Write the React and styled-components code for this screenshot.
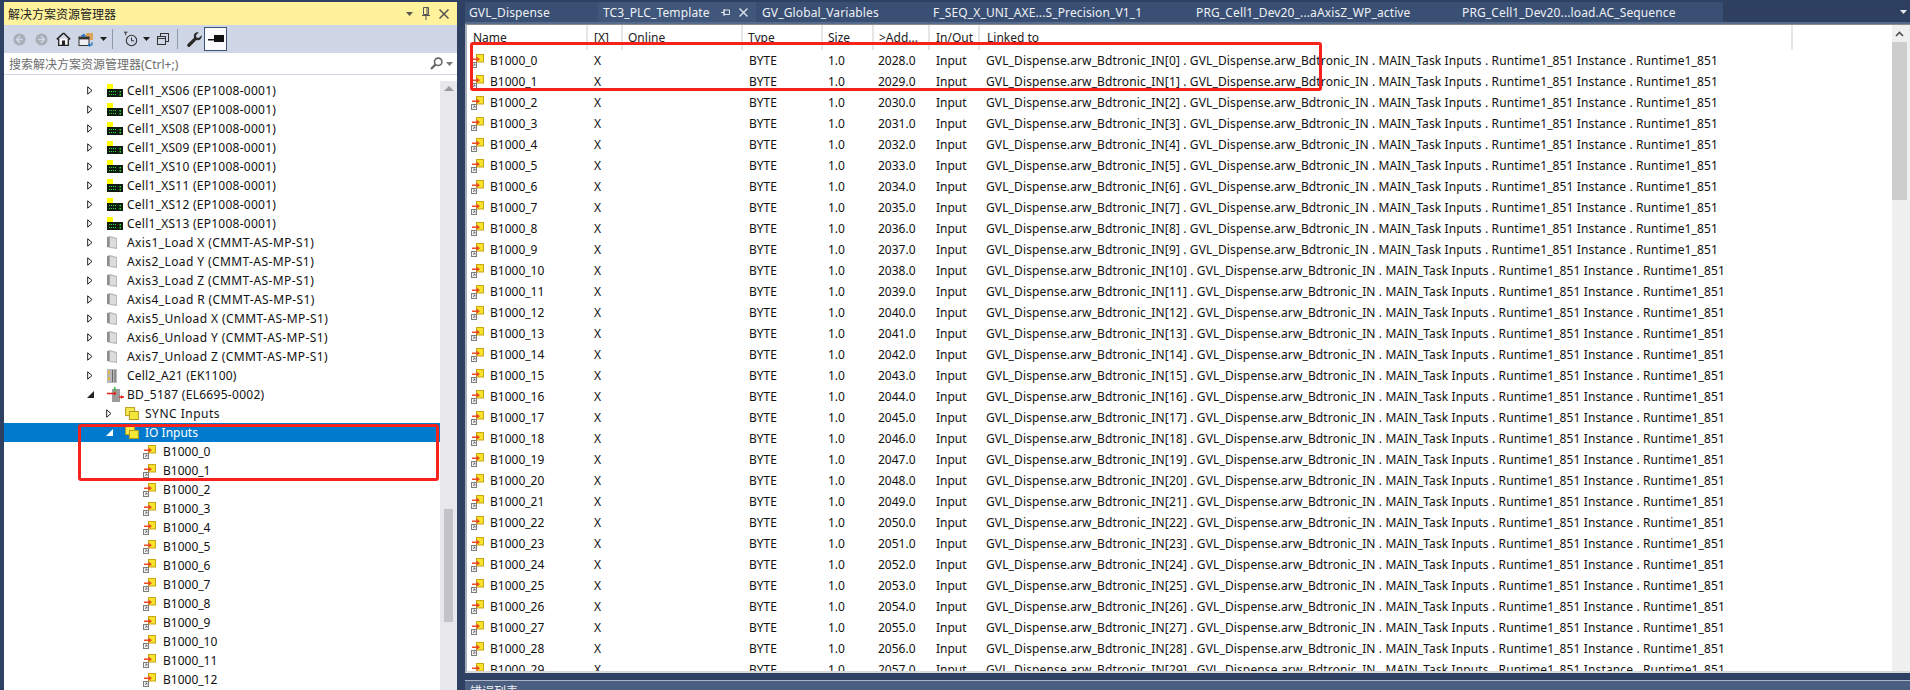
import React from "react";
import styled, { createGlobalStyle } from "styled-components";

const Global = createGlobalStyle`
  html, body { margin: 0; padding: 0; background: #2f4163; overflow: hidden; }
  #root { width: 1910px; height: 690px; }
`;

const FONT = `"Noto Sans", "Noto Sans CJK SC", sans-serif`;

const Shell = styled.div`
  position: relative;
  width: 1910px;
  height: 690px;
  overflow: hidden;
  display: flex;
  align-items: flex-start;
  background: #2f4163;
  font-family: ${FONT};
  font-size: 12px;
  color: #111;
  padding: 2px 0 0 4px;
  box-sizing: border-box;
`;

const LeftPanel = styled.section`
  width: 453px;
  height: 688px;
  flex: none;
  display: flex;
  flex-direction: column;
  background: #fff;
`;
const TitleBar = styled.header`
  height: 23px;
  flex: none;
  background: #fff29d;
  display: flex;
  align-items: center;
  padding: 0 8px 0 4px;
  font-size: 12px;
  color: #222;
`;
const TitleText = styled.span`
  flex: 1;
`;
const TitleIcons = styled.div`
  display: flex;
  align-items: center;
  gap: 9px;
`;
const Toolbar = styled.div`
  height: 28px;
  flex: none;
  background: #cfd6e5;
  display: flex;
  align-items: center;
  padding-left: 8px;
`;
const ToolSlot = styled.span`
  width: ${(p) => p.$w}px;
  height: 24px;
  flex: none;
  display: flex;
  align-items: center;
  justify-content: center;
`;
const ToolSep = styled.span`
  width: 1px;
  height: 20px;
  flex: none;
  background: #8e99ae;
  margin: 0 ${(p) => p.$m}px;
`;
const ActiveTool = styled.span`
  width: 23px;
  height: 24px;
  flex: none;
  margin-left: 1px;
  box-sizing: border-box;
  border: 1px solid #3d5275;
  background: #fbfbfd;
  display: flex;
  align-items: center;
  justify-content: center;
`;
const SearchBox = styled.div`
  height: 22px;
  flex: none;
  background: #fff;
  display: flex;
  align-items: center;
  padding: 0 2px 0 5px;
  box-sizing: border-box;
  border-bottom: 1px solid #cfd6e5;
  color: #6d6d6d;
  font-size: 12px;
`;
const SearchText = styled.span`
  flex: 1;
`;
const TreeArea = styled.div`
  flex: 1;
  min-height: 0;
  display: flex;
  padding-top: 6px;
  overflow: hidden;
`;
const TreeList = styled.div`
  flex: 1;
  min-width: 0;
`;
const TreeRow = styled.div`
  height: 19px;
  display: flex;
  align-items: center;
  white-space: nowrap;
  padding-left: ${(p) => p.$indent}px;
  background: ${(p) => (p.$selected ? "#007acc" : "transparent")};
  color: ${(p) => (p.$selected ? "#fff" : "#111")};
  font-size: 12px;
`;
const TreeArrow = styled.span`
  width: ${(p) => p.$w}px;
  height: 19px;
  flex: none;
  display: flex;
  align-items: center;
  justify-content: flex-start;
`;
const TreeIcon = styled.span`
  width: ${(p) => p.$w}px;
  height: 19px;
  flex: none;
  display: flex;
  align-items: center;
`;
const TreeLabel = styled.span`
  letter-spacing: ${(p) => p.$ls || 0}px;
`;
const TreeScroll = styled.div`
  width: 17px;
  flex: none;
  background: #e8e8ec;
  display: flex;
  flex-direction: column;
  align-items: center;
  position: relative;
`;
const TreeArrowUp = styled.span`
  margin-top: 5px;
  width: 0;
  height: 0;
  border-left: 5px solid transparent;
  border-right: 5px solid transparent;
  border-bottom: 5px solid #9a9aa1;
`;
const TreeThumb = styled.span`
  width: 9px;
  height: 113px;
  background: #c2c3c9;
  margin-top: 418px;
`;

const RightColumn = styled.div`
  width: 1445px;
  margin-left: 8px;
  flex: none;
  display: flex;
  flex-direction: column;
  height: 688px;
`;
const TabStrip = styled.nav`
  height: 20px;
  flex: none;
  display: flex;
  align-items: stretch;
  background: #2e3f5f;
  border-bottom: 2px solid #566a8c;
  color: #eef1f6;
  font-size: 12px;
  letter-spacing: 0.13px;
`;
const Tab = styled.div`
  width: ${(p) => p.$w}px;
  flex: none;
  box-sizing: border-box;
  padding-left: ${(p) => p.$pad}px;
  background: ${(p) => (p.$active ? "#40567b" : "#3a4f74")};
  display: flex;
  align-items: center;
  white-space: nowrap;
  overflow: hidden;
`;
const TabActions = styled.span`
  margin-left: auto;
  display: flex;
  align-items: center;
  gap: 9px;
  padding-right: 8px;
`;
const TabOverflow = styled.span`
  margin-left: auto;
  margin-right: 3px;
  align-self: center;
  display: flex;
`;
const Editor = styled.div`
  height: 649px;
  flex: none;
  display: flex;
  background: #fff;
  border-top: 1px solid #8a8a8a;
  border-left: 2px solid #a9afbb;
  border-bottom: 2px solid #d8d8d8;
  box-sizing: border-box;
  overflow: hidden;
`;
const TableWrap = styled.div`
  flex: 1;
  min-width: 0;
  overflow: hidden;
`;
const HeaderRow = styled.div`
  height: 25px;
  display: grid;
  grid-template-columns: ${(p) => p.$cols};
  font-size: 12px;
  color: #222;
`;
const HeaderCell = styled.div`
  border-right: 2px solid #e6e6e6;
  box-sizing: border-box;
  padding: 4px 0 0 ${(p) => p.$pad}px;
  white-space: nowrap;
  overflow: hidden;
`;
const DataRow = styled.div`
  height: 21px;
  display: grid;
  grid-template-columns: ${(p) => p.$cols};
  align-items: center;
  white-space: nowrap;
  font-size: 12px;
  color: #111;
`;
const DataCell = styled.div`
  padding-left: ${(p) => p.$pad || 0}px;
  display: flex;
  align-items: center;
`;
const LinkedText = styled.span`
  letter-spacing: 0.13px;
`;
const NameIcon = styled.span`
  width: 19px;
  flex: none;
  display: flex;
`;
const VScroll = styled.div`
  width: 18px;
  flex: none;
  background: #f0f0f0;
  display: flex;
  flex-direction: column;
`;
const VScrollBtn = styled.span`
  width: 15px;
  height: 17px;
  display: flex;
  align-items: center;
  justify-content: center;
`;
const VThumb = styled.span`
  width: 15px;
  height: 158px;
  background: #cdcdcd;
`;
const BottomPanel = styled.div`
  height: 12px;
  margin-top: 7px;
  flex: none;
  background: #4d5f80;
  border-top: 1px solid #a9b3c6;
  color: #eef1f6;
  font-size: 12px;
  padding: 3px 0 0 5px;
  line-height: 16px;
  overflow: hidden;
`;
const RedBox = styled.div`
  position: absolute;
  left: ${(p) => p.$x}px;
  top: ${(p) => p.$y}px;
  width: ${(p) => p.$w}px;
  height: ${(p) => p.$h}px;
  box-sizing: border-box;
  border: 3px solid #f5231c;
  border-radius: 3px;
  pointer-events: none;
`;

const Caret = ({ color = "#1e1e1e" }) => (
  <svg width="7" height="4" viewBox="0 0 7 4"><path d="M0 0h7L3.5 4z" fill={color} /></svg>
);
const Closed = () => (
  <svg width="6" height="9" viewBox="0 0 6 9"><path d="M.7.8 5 4.5.7 8.2z" fill="#fff" stroke="#222" /></svg>
);
const Open = ({ white }) => (
  <svg width="7" height="7" viewBox="0 0 7 7"><path d="M7 0v7H0z" fill={white ? "#fff" : "#222"} /></svg>
);
const CircleArrow = ({ dir }) => (
  <svg width="13" height="13" viewBox="0 0 13 13">
    <circle cx="6.5" cy="6.5" r="6" fill="#a8adb6" />
    <path d={dir < 0 ? "M7 3 3.6 6.5 7 10M4 6.5h6" : "M6 3l3.4 3.5L6 10M9 6.5H3"} stroke="#cfd6e5" strokeWidth="1.6" fill="none" />
  </svg>
);
const Home = () => (
  <svg width="15" height="14" viewBox="0 0 15 14">
    <path d="M7.5 1 .8 7.4M7.5 1l6.7 6.4" stroke="#222" strokeWidth="1.5" fill="none" />
    <path d="M2.7 6.5V13.3h9.6V6.5" stroke="#222" strokeWidth="1.3" fill="#f6f6f6" />
    <rect x="6" y="8.5" width="3" height="4.8" fill="#222" />
  </svg>
);
const Sync = () => (
  <svg width="16" height="15" viewBox="0 0 16 15">
    <rect x="8" y="1" width="7" height="7" fill="#d9a45a" />
    <rect x="1" y="5" width="10" height="8.5" fill="#eef0f4" stroke="#333" />
    <rect x="1" y="5" width="10" height="2.4" fill="#333" />
    <path d="M3 3.5h3M5 1.8 7 3.5 5 5" stroke="#1d6fb8" strokeWidth="1.1" fill="none" />
    <path d="M14 10v3h-3M12.2 11.5 10.5 13l1.7 1.5" stroke="#1d6fb8" strokeWidth="1.1" fill="none" />
  </svg>
);
const Clock = () => (
  <svg width="15" height="16" viewBox="0 0 15 16">
    <circle cx="8.5" cy="9.5" r="5.2" fill="none" stroke="#333" strokeWidth="1.1" />
    <path d="M8.5 6.5v3.3h2.6" fill="none" stroke="#333" />
    <path d="M1 1.2h3.4M2.7 1.2v3" stroke="#333" />
  </svg>
);
const Copy = () => (
  <svg width="12" height="12" viewBox="0 0 12 12" fill="none" stroke="#333">
    <rect x="3.5" y=".5" width="8" height="8" />
    <rect x=".5" y="3.5" width="8" height="8" fill="#cfd6e5" />
    <path d="M1 5.5h7" />
  </svg>
);
const Wrench = () => (
  <svg width="15" height="15" viewBox="0 0 15 15">
    <path d="M14.6 3.2 11.7 6 9.4 5.4 8.9 3.2 11.7.4C9.2-.4 6.6 1.4 6.8 4.2c0 .6.2 1.1.3 1.5L.7 12.1a1.6 1.6 0 0 0 2.3 2.3l6.4-6.4c2.9 1.1 6-1.4 5.2-4.8z" fill="#2a2a2a" />
  </svg>
);
const PinOff = () => (
  <svg width="16" height="8" viewBox="0 0 16 8">
    <rect x="0" y="4" width="6" height="1.5" fill="#111" />
    <rect x="6" y="0" width="10" height="7" fill="#111" />
  </svg>
);
const Magnifier = () => (
  <svg width="13" height="13" viewBox="0 0 13 13" fill="none">
    <circle cx="8.2" cy="4.8" r="3.7" stroke="#666" strokeWidth="1.6" />
    <path d="M5.4 7.6 1 12" stroke="#666" strokeWidth="2.2" />
  </svg>
);
const TitlePin = () => (
  <svg width="8" height="13" viewBox="0 0 8 13" fill="none" stroke="#555">
    <path d="M1.5.5h5v7h-5z" />
    <path d="M0 8.5h8M4 8.5V13M5 1v6" />
  </svg>
);
const TitleClose = () => (
  <svg width="10" height="10" viewBox="0 0 10 10" stroke="#555" strokeWidth="1.5"><path d="M.5.5l9 9M9.5.5l-9 9" /></svg>
);
const TabPin = () => (
  <svg width="9" height="9" viewBox="0 0 9 9" fill="none" stroke="#dfe4ec"><path d="M0 4.5h3M3 2h5.5v4.5H3zM3 1v7" /></svg>
);
const TabClose = () => (
  <svg width="9" height="9" viewBox="0 0 9 9" stroke="#dfe4ec" strokeWidth="1.4"><path d="M.5.5l8 8M8.5.5l-8 8" /></svg>
);
const TerminalIcon = () => (
  <svg width="16" height="13" viewBox="0 0 16 13">
    <rect x="0" y="0" width="6" height="5" fill="#ffff00" />
    <rect x="0" y="5" width="16" height="8" fill="#0f1a10" />
    <path d="M2 7h1v1H2zM4 7h1v1H4zM6 7h1v1H6zM8 7h1v1H8zM2 10h1v1H2zM4 10h1v1H4zM6 10h1v1H6zM8 10h1v1H8zM12.5 7h1.5v1.5h-1.5zM12.5 10h1.5v1.5h-1.5z" fill="#2fe02f" />
  </svg>
);
const DriveIcon = () => (
  <svg width="10" height="13" viewBox="0 0 10 13">
    <path d="M0 1 3 0l7 2v11l-7-1-3-1z" fill="#b9b9b9" />
    <path d="M3 1.5 9 3v8.5L3 11z" fill="#dcdcdc" />
    <path d="M0 1h2.5v10H0z" fill="#8d8d8d" />
  </svg>
);
const CouplerIcon = () => (
  <svg width="10" height="14" viewBox="0 0 10 14">
    <rect width="10" height="14" fill="#b8b8b8" />
    <rect x="1" y="2" width="2" height="3" fill="#e3b93c" />
    <rect x="1" y="8" width="2" height="3" fill="#e3b93c" />
    <path d="M5 1h1v12H5zM7.5 1h1v12h-1z" fill="#555" opacity=".8" />
  </svg>
);
const BridgeIcon = () => (
  <svg width="17" height="15" viewBox="0 0 17 15">
    <rect x="5" y="2" width="8" height="13" fill="#9c9c9c" />
    <rect x="7" y="0" width="1.5" height="4" fill="#35b535" />
    <path d="M0 6.5h9M12 10h5" stroke="#e0241b" strokeWidth="1.3" />
    <path d="M7 4.5l2.5 2-2.5 2zM14 8l2.5 2-2.5 2z" fill="#e0241b" />
  </svg>
);
const FolderIcon = () => (
  <svg width="14" height="13" viewBox="0 0 14 13">
    <rect x=".6" y=".6" width="9" height="8" fill="#f6ec4f" stroke="#b59a1c" />
    <rect x="4.4" y="4.5" width="9" height="8" fill="#f3e83a" stroke="#b59a1c" />
  </svg>
);
const VarIcon = () => (
  <svg width="13" height="14" viewBox="0 0 13 14">
    <rect x="5.5" y=".5" width="7" height="7.5" fill="#f7e22c" stroke="#c9a516" />
    <path d="M1 4.5h4.5V2.6L9 5.2 5.5 7.8V6H1z" fill="#ea4b23" />
    <rect x=".5" y="8.5" width="5" height="5" fill="#f3f3f3" stroke="#7d7d7d" />
    <path d="M2 12l2-2M2.4 10H4v1.6" stroke="#555" strokeWidth=".7" fill="none" />
  </svg>
);

const range = (a, b) => Array.from({ length: b - a + 1 }, (_, i) => i + a);

const treeRows = [
  ...["06", "07", "08", "09", "10", "11", "12", "13"].map((n) => ({ l: 1, a: "c", i: <TerminalIcon />, t: `Cell1_XS${n} (EP1008-0001)`, ls: 0.25 })),
  ...[
    "Axis1_Load X", "Axis2_Load Y", "Axis3_Load Z", "Axis4_Load R",
    "Axis5_Unload X", "Axis6_Unload Y", "Axis7_Unload Z",
  ].map((n) => ({ l: 1, a: "c", i: <DriveIcon />, t: `${n} (CMMT-AS-MP-S1)`, ls: 0.4 })),
  { l: 1, a: "c", i: <CouplerIcon />, t: "Cell2_A21 (EK1100)", ls: 0.2 },
  { l: 1, a: "o", i: <BridgeIcon />, t: "BD_5187 (EL6695-0002)", ls: 0.29 },
  { l: 2, a: "c", i: <FolderIcon />, t: "SYNC Inputs", ls: 0.5 },
  { l: 2, a: "w", i: <FolderIcon />, t: "IO Inputs", sel: true },
  ...range(0, 12).map((n) => ({ l: 3, i: <VarIcon />, t: `B1000_${n}` })),
];

const arrowWidth = { 1: 20, 2: 19 };
const iconWidth = { 1: 20, 2: 20, 3: 20 };
const arrowIndent = { 1: 83, 2: 102, 3: 139 };

const COLS = "121px 35px 120px 80px 51px 56px 50px 813px 1fr";
const tabs = [
  { w: 133, p: 4, t: "GVL_Dispense" },
  { w: 158, p: 5, t: "TC3_PLC_Template", active: true },
  { w: 171, p: 6, t: "GV_Global_Variables" },
  { w: 269, p: 6, t: "F_SEQ_X_UNI_AXE...S_Precision_V1_1" },
  { w: 266, p: 0, t: "PRG_Cell1_Dev20_...aAxisZ_WP_active" },
  { w: 261, p: 0, t: "PRG_Cell1_Dev20...load.AC_Sequence" },
];

export default function App() {
  return (
    <Shell>
      <Global />
      <LeftPanel>
        <TitleBar>
          <TitleText>解决方案资源管理器</TitleText>
          <TitleIcons>
            <Caret color="#555" />
            <TitlePin />
            <TitleClose />
          </TitleIcons>
        </TitleBar>
        <Toolbar>
          <ToolSlot $w={14}><CircleArrow dir={-1} /></ToolSlot>
          <ToolSlot $w={8} />
          <ToolSlot $w={14}><CircleArrow dir={1} /></ToolSlot>
          <ToolSlot $w={8} />
          <ToolSlot $w={15}><Home /></ToolSlot>
          <ToolSlot $w={7} />
          <ToolSlot $w={16}><Sync /></ToolSlot>
          <ToolSlot $w={18}><Caret /></ToolSlot>
          <ToolSep $m={0} />
          <ToolSlot $w={9} />
          <ToolSlot $w={16}><Clock /></ToolSlot>
          <ToolSlot $w={16}><Caret /></ToolSlot>
          <ToolSlot $w={2} />
          <ToolSlot $w={14}><Copy /></ToolSlot>
          <ToolSep $m={7} />
          <ToolSlot $w={18}><Wrench /></ToolSlot>
          <ActiveTool><PinOff /></ActiveTool>
        </Toolbar>
        <SearchBox>
          <SearchText>搜索解决方案资源管理器(Ctrl+;)</SearchText>
          <Magnifier />
          <ToolSlot $w={12}><Caret color="#777" /></ToolSlot>
        </SearchBox>
        <TreeArea>
          <TreeList>
            {treeRows.map((r, i) => (
              <TreeRow key={i} $indent={arrowIndent[r.l]} $selected={r.sel}>
                {r.a && (
                  <TreeArrow $w={arrowWidth[r.l]}>{r.a === "c" ? <Closed /> : <Open white={r.a === "w"} />}</TreeArrow>
                )}
                <TreeIcon $w={iconWidth[r.l]}>{r.i}</TreeIcon>
                <TreeLabel $ls={r.ls}>{r.t}</TreeLabel>
              </TreeRow>
            ))}
          </TreeList>
          <TreeScroll>
            <TreeArrowUp />
            <TreeThumb />
          </TreeScroll>
        </TreeArea>
      </LeftPanel>
      <RightColumn>
        <TabStrip>
          {tabs.map((t) => (
            <Tab key={t.t} $w={t.w} $pad={t.p} $active={t.active}>
              {t.t}
              {t.active && (
                <TabActions>
                  <TabPin />
                  <TabClose />
                </TabActions>
              )}
            </Tab>
          ))}
          <TabOverflow><Caret color="#e6e9ef" /></TabOverflow>
        </TabStrip>
        <Editor>
          <TableWrap>
            <HeaderRow $cols={COLS}>
              <HeaderCell $pad={6}>Name</HeaderCell>
              <HeaderCell $pad={6}>[X]</HeaderCell>
              <HeaderCell $pad={5}>Online</HeaderCell>
              <HeaderCell $pad={5}>Type</HeaderCell>
              <HeaderCell $pad={5}>Size</HeaderCell>
              <HeaderCell $pad={5}>&gt;Add...</HeaderCell>
              <HeaderCell $pad={6}>In/Out</HeaderCell>
              <HeaderCell $pad={7}>Linked to</HeaderCell>
              <div />
            </HeaderRow>
            {range(0, 29).map((n) => (
              <DataRow key={n} $cols={COLS}>
                <DataCell $pad={4}>
                  <NameIcon><VarIcon /></NameIcon>
                  B1000_{n}
                </DataCell>
                <DataCell $pad={6}>X</DataCell>
                <DataCell />
                <DataCell $pad={6}>BYTE</DataCell>
                <DataCell $pad={5}>1.0</DataCell>
                <DataCell $pad={4}>{2028 + n}.0</DataCell>
                <DataCell $pad={6}>Input</DataCell>
                <DataCell $pad={6}>
                  <LinkedText>
                    {`GVL_Dispense.arw_Bdtronic_IN[${n}] . GVL_Dispense.arw_Bdtronic_IN . MAIN_Task Inputs . Runtime1_851 Instance . Runtime1_851`}
                  </LinkedText>
                </DataCell>
              </DataRow>
            ))}
          </TableWrap>
          <VScroll>
            <VScrollBtn>
              <svg width="9" height="6" viewBox="0 0 9 6" fill="none" stroke="#505050" strokeWidth="1.6"><path d="M1 5l3.5-3.5L8 5" /></svg>
            </VScrollBtn>
            <VThumb />
          </VScroll>
        </Editor>
        <BottomPanel>错误列表</BottomPanel>
      </RightColumn>
      <RedBox $x={78} $y={424} $w={361} $h={57} />
      <RedBox $x={470} $y={42} $w={852} $h={49} />
    </Shell>
  );
}
